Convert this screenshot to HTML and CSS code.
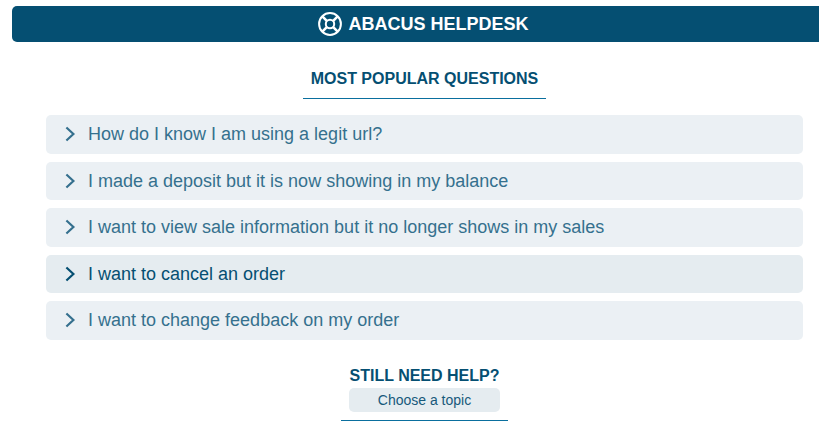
FILE: index.html
```html
<!DOCTYPE html>
<html lang="en">
<head>
    <meta charset="UTF-8">
    <meta name="viewport" content="width=device-width, initial-scale=1.0">
    <title>Abacus Helpdesk</title>
    <link rel="stylesheet" href="styles.css">
</head>
<body>

<div class="page">
    <div class="header">
        <svg class="header-icon" viewBox="0 0 24 24" fill="none" stroke="#fff" stroke-width="2">
            <circle cx="12" cy="12" r="10.9"/>
            <circle cx="12" cy="12" r="4.2"/>
            <path d="M4.3 4.3l5 5M19.7 4.3l-5 5M4.3 19.7l5-5M19.7 19.7l-5-5" stroke-width="2.6"/>
        </svg>
        <span>ABACUS HELPDESK</span>
    </div>

    <div class="section-title">
        <h2>MOST POPULAR QUESTIONS</h2>
    </div>

    <div class="questions">
        <div class="question">
            <svg class="chevron" viewBox="0 0 12 16"><path d="M2.4 1.5l7 6.5-7 6.5"/></svg>
            <span>How do I know I am using a legit url?</span>
        </div>
        <div class="question">
            <svg class="chevron" viewBox="0 0 12 16"><path d="M2.4 1.5l7 6.5-7 6.5"/></svg>
            <span>I made a deposit but it is now showing in my balance</span>
        </div>
        <div class="question">
            <svg class="chevron" viewBox="0 0 12 16"><path d="M2.4 1.5l7 6.5-7 6.5"/></svg>
            <span>I want to view sale information but it no longer shows in my sales</span>
        </div>
        <div class="question active">
            <svg class="chevron" viewBox="0 0 12 16"><path d="M2.4 1.5l7 6.5-7 6.5"/></svg>
            <span>I want to cancel an order</span>
        </div>
        <div class="question">
            <svg class="chevron" viewBox="0 0 12 16"><path d="M2.4 1.5l7 6.5-7 6.5"/></svg>
            <span>I want to change feedback on my order</span>
        </div>
    </div>

    <div class="help">
        <h3>STILL NEED HELP?</h3>
        <button class="topic-button">Choose a topic</button>
    </div>
</div>

</body>
</html>
```

FILE: styles.css
```css
html, body {
    overflow: hidden;
}

body {
    font-family: 'Liberation Sans', Arial, sans-serif;
    background-color: #fff;
    color: #054f72;
    margin: 0;
}

.page {
    width: 825px;
    margin-left: 12px;
    padding-top: 6px;
}

.header {
    display: flex;
    align-items: center;
    justify-content: center;
    gap: 6px;
    box-sizing: border-box;
    height: 36px;
    padding-right: 2px;
    background-color: #054f72;
    border-radius: 5px;
    color: #fff;
    font-size: 18px;
    font-weight: bold;
}

.header-icon {
    width: 24px;
    height: 24px;
}

.section-title {
    display: flex;
    justify-content: center;
    margin-top: 18px;
}

.section-title h2 {
    width: 243px;
    margin: 0;
    padding: 10px 0 10px;
    border-bottom: 1px solid #0a6f9e;
    font-size: 16px;
    line-height: 18px;
    text-align: center;
}

.questions {
    display: flex;
    flex-direction: column;
    gap: 8px;
    margin: 16px 34px 0;
}

.question {
    display: flex;
    align-items: center;
    box-sizing: border-box;
    height: 38.5px;
    padding-top: 0.5px;
    padding-left: 18px;
    background-color: #ebf0f4;
    border-radius: 5px;
    color: #35708e;
    font-size: 18px;
}

.question.active {
    background-color: #e5ecf0;
    color: #054f72;
}

.chevron {
    flex: none;
    width: 12px;
    height: 16px;
    margin-top: -1px;
    margin-right: 12px;
    fill: none;
    stroke: currentColor;
    stroke-width: 2.2;
}

.help {
    display: flex;
    flex-direction: column;
    align-items: center;
    width: 167px;
    margin: 26px auto 0;
    padding-bottom: 8px;
    border-bottom: 1px solid #0a6f9e;
}

.help h3 {
    margin: 0 0 3px;
    font-size: 16px;
    line-height: 19px;
}

.topic-button {
    width: 151px;
    height: 24px;
    padding: 0;
    border: none;
    border-radius: 5px;
    background-color: #e5ecf0;
    color: #17597b;
    font-family: inherit;
    font-size: 14px;
}
```
